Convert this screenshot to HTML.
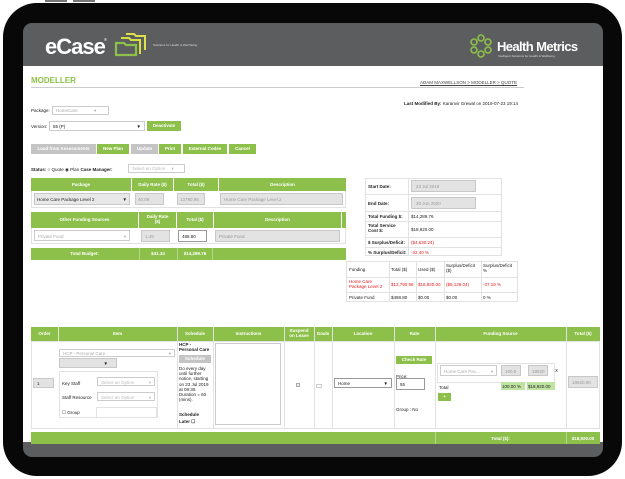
<!DOCTYPE html>
<html><head><style>
*{margin:0;padding:0;box-sizing:border-box}
body{width:625px;height:479px;background:#fff;position:relative;overflow:hidden;font-family:"Liberation Sans",sans-serif;color:#222}
.a{position:absolute}
.t{font-size:4.5px;white-space:nowrap}
.g{background:#8dc04b;color:#fff;font-weight:bold;text-align:center}
.in{background:#e3e3e3;border:1px solid #c8c8c8}
.wb{background:#fff;border:1px solid #ccc}
.bd{border:1px solid #e2e2e2}
.btn{position:absolute;top:144px;height:10px;font-size:4.5px;font-weight:bold;color:#fff;text-align:center;line-height:10px}
</style></head><body>
<div class="a" style="left:3px;top:3px;width:619px;height:473px;background:#080808;border-radius:34px"></div>
<div class="a" style="left:45px;top:0;width:22px;height:2px;background:#777"></div>
<div class="a" style="left:73px;top:0;width:22px;height:2px;background:#777"></div>
<div class="a" style="left:23px;top:23px;width:580px;height:434px;background:#5c5d5e;border-radius:9px;overflow:hidden">
 <div class="a" style="left:0;top:43px;width:580px;height:376px;background:#fff"></div>
</div>
<!-- header -->
<div class="a" style="left:45px;top:34px;font-size:22px;font-weight:bold;color:#fff;letter-spacing:-1px">eCase</div>
<div class="a" style="left:104px;top:37px;font-size:4px;color:#fff">®</div>
<svg class="a" style="left:114px;top:32px" width="34" height="25"><path d="M12 2h8l2 2h9v14" fill="none" stroke="#e0e04a" stroke-width="2"/><path d="M7 6h8l2 2h9v14" fill="none" stroke="#d7df3e" stroke-width="2"/><path d="M2 11h8l2 2h10v10H2z" fill="none" stroke="#8dc04b" stroke-width="2.2"/></svg>
<div class="a t" style="left:153px;top:43px;font-size:3px;color:#ddd">Solutions for Health &amp; Well Being</div>
<svg class="a" style="left:469px;top:34px" width="24" height="24"><g fill="none" stroke="#8dc04b" stroke-width="1.6"><circle cx="12" cy="4" r="3"/><circle cx="19" cy="8" r="3"/><circle cx="19" cy="16" r="3"/><circle cx="12" cy="20" r="3"/><circle cx="5" cy="16" r="3"/><circle cx="5" cy="8" r="3"/></g></svg>
<div class="a" style="left:497px;top:39px;font-size:13px;font-weight:bold;color:#fff;letter-spacing:-0.6px">Health Metrics</div>
<div class="a t" style="left:498px;top:54px;font-size:3px;color:#ddd">Intelligent Solutions for Health &amp; Wellbeing</div>
<!-- title -->
<div class="a" style="left:31px;top:76px;font-size:8px;font-weight:bold;color:#8dc04b">MODELLER</div>
<div class="a t" style="left:420px;top:80px;font-size:4.5px;text-decoration:underline;color:#444">ADAM MAXWELLSON &gt; MODELLER &gt; QUOTE</div>
<div class="a" style="left:31px;top:87px;width:493px;height:1px;background:#ccc"></div>
<div class="a t" style="left:404px;top:101px"><b>Last Modified By:</b> Karanvir Grewal on 2019-07-23 19:14</div>
<div class="a t" style="left:31px;top:108px">Package:</div>
<div class="a wb t" style="left:52px;top:106px;width:57px;height:9px;color:#aaa;padding:1px 3px">HomeCare&nbsp;&nbsp;&nbsp;&nbsp;&nbsp;&nbsp;&nbsp;&nbsp;&nbsp;&nbsp;&nbsp;&nbsp;&nbsp;▾</div>
<div class="a t" style="left:31px;top:124px">Version:</div>
<div class="a wb t" style="left:49px;top:121px;width:96px;height:10px;padding:2px 3px">55 (P)<span style="float:right">▼</span></div>
<div class="a g t" style="left:147px;top:121px;width:34px;height:10px;line-height:10px">Deactivate</div>
<div class="btn" style="left:31px;width:65px;background:#c4c4c4">Load from Assessments</div>
<div class="btn" style="left:97px;width:32px;background:#8dc04b">New Plan</div>
<div class="btn" style="left:131px;width:27px;background:#c4c4c4">Update</div>
<div class="btn" style="left:159px;width:22px;background:#8dc04b">Print</div>
<div class="btn" style="left:183px;width:44px;background:#8dc04b">External Codes</div>
<div class="btn" style="left:229px;width:27px;background:#8dc04b">Cancel</div>
<div class="a t" style="left:31px;top:167px"><b>Status:</b> ○ Quote ◉ Plan <b>Case Manager:</b></div>
<div class="a wb t" style="left:128px;top:164px;width:57px;height:9px;color:#bbb;padding:1px 3px">Select an Option&nbsp;&nbsp;&nbsp;&nbsp;&nbsp;▾</div>
<!-- package table -->
<div class="a bd" style="left:31px;top:178px;width:315px;height:30px"></div>
<div class="a g t" style="left:31px;top:178px;width:100px;height:13px;line-height:13px">Package</div>
<div class="a g t" style="left:132px;top:178px;width:41px;height:13px;line-height:13px">Daily Rate ($)</div>
<div class="a g t" style="left:174px;top:178px;width:44px;height:13px;line-height:13px">Total ($)</div>
<div class="a g t" style="left:219px;top:178px;width:127px;height:13px;line-height:13px">Description</div>
<div class="a in t" style="left:34px;top:193px;width:96px;height:12px;padding:3px 2px;background:#e8e8e8">Home Care Package Level 2<span style="float:right">▼</span></div>
<div class="a in t" style="left:135px;top:193px;width:29px;height:12px;padding:3px 2px;color:#999">40.09</div>
<div class="a in t" style="left:177px;top:193px;width:28px;height:12px;padding:3px 2px;color:#999">13790.96</div>
<div class="a in t" style="left:220px;top:193px;width:123px;height:12px;padding:3px 3px;color:#999">Home Care Package Level 2</div>
<!-- other funding -->
<div class="a bd" style="left:31px;top:212px;width:315px;height:32px"></div>
<div class="a g t" style="left:31px;top:212px;width:107px;height:16px;line-height:16px">Other Funding Sources</div>
<div class="a g t" style="left:139px;top:212px;width:37px;height:16px;line-height:5px;padding-top:2px">Daily Rate<br>($)</div>
<div class="a g t" style="left:177px;top:212px;width:36px;height:16px;line-height:16px">Total ($)</div>
<div class="a g t" style="left:214px;top:212px;width:127px;height:16px;line-height:16px">Description</div>
<div class="a g" style="left:342px;top:212px;width:4px;height:16px"></div>
<div class="a wb t" style="left:34px;top:230px;width:96px;height:11px;padding:3px 3px;color:#aaa">Private Fund<span style="float:right">▾</span></div>
<div class="a in t" style="left:141px;top:230px;width:29px;height:12px;padding:3px 3px;color:#999">1.45</div>
<div class="a wb t" style="left:178px;top:230px;width:29px;height:12px;padding:3px 3px;border-color:#999">488.80</div>
<div class="a in t" style="left:215px;top:230px;width:125px;height:12px;padding:3px 3px;color:#999">Private Fund</div>
<!-- total budget -->
<div class="a g t" style="left:31px;top:248px;width:315px;height:12px"></div>
<div class="a g t" style="left:31px;top:248px;width:107px;height:12px;line-height:12px">Total Budget:</div>
<div class="a g t" style="left:139px;top:248px;width:37px;height:12px;line-height:12px;border-left:1px solid #b5d88c">$41.34</div>
<div class="a g t" style="left:177px;top:248px;width:36px;height:12px;line-height:12px;border-left:1px solid #b5d88c;border-right:1px solid #b5d88c">$14,289.76</div>
<!-- info table -->
<div class="a bd" style="left:365px;top:178px;width:137px;height:78px"></div>
<div class="a" style="left:365px;top:194px;width:137px;height:1px;background:#e2e2e2"></div>
<div class="a" style="left:365px;top:211px;width:137px;height:1px;background:#e2e2e2"></div>
<div class="a" style="left:365px;top:221px;width:137px;height:1px;background:#e2e2e2"></div>
<div class="a" style="left:365px;top:237px;width:137px;height:1px;background:#e2e2e2"></div>
<div class="a" style="left:365px;top:247px;width:137px;height:1px;background:#e2e2e2"></div>
<div class="a" style="left:408px;top:178px;width:1px;height:78px;background:#e2e2e2"></div>
<div class="a t" style="left:368px;top:184px;font-weight:bold">Start Date:</div>
<div class="a in t" style="left:411px;top:180px;width:65px;height:12px;padding:3px 4px;color:#999">23 Jul 2019</div>
<div class="a t" style="left:368px;top:201px;font-weight:bold">End Date:</div>
<div class="a in t" style="left:411px;top:197px;width:65px;height:12px;padding:3px 4px;color:#999">30 Jun 2020</div>
<div class="a t" style="left:368px;top:214px;font-weight:bold">Total Funding $:</div>
<div class="a t" style="left:411px;top:214px">$14,289.76</div>
<div class="a t" style="left:368px;top:223px;font-weight:bold;line-height:5px">Total Service<br>Cost $:</div>
<div class="a t" style="left:411px;top:227px">$18,920.00</div>
<div class="a t" style="left:368px;top:240px;font-weight:bold">$ Surplus/Deficit:</div>
<div class="a t" style="left:411px;top:240px;color:#e02020">($4,630.24)</div>
<div class="a t" style="left:368px;top:250px;font-weight:bold">% Surplus/Deficit:</div>
<div class="a t" style="left:411px;top:250px;color:#e02020">-32.40 %</div>
<!-- funding table -->
<div class="a bd" style="left:346px;top:261px;width:172px;height:41px"></div>
<div class="a" style="left:346px;top:277px;width:172px;height:1px;background:#e2e2e2"></div>
<div class="a" style="left:346px;top:292px;width:172px;height:1px;background:#e2e2e2"></div>
<div class="a" style="left:389px;top:261px;width:1px;height:41px;background:#e2e2e2"></div>
<div class="a" style="left:416px;top:261px;width:1px;height:41px;background:#e2e2e2"></div>
<div class="a" style="left:444px;top:261px;width:1px;height:41px;background:#e2e2e2"></div>
<div class="a" style="left:481px;top:261px;width:1px;height:41px;background:#e2e2e2"></div>
<div class="a t" style="left:349px;top:267px">Funding</div>
<div class="a t" style="left:391px;top:267px">Total ($)</div>
<div class="a t" style="left:418px;top:267px">Used ($)</div>
<div class="a t" style="left:446px;top:263px;line-height:5px">Surplus/Deficit<br>($)</div>
<div class="a t" style="left:483px;top:263px;line-height:5px">Surplus/Deficit<br>%</div>
<div class="a t" style="left:349px;top:279px;line-height:5px;color:#e02020">Home Care<br>Package Level 2</div>
<div class="a t" style="left:391px;top:282px;color:#e02020">$13,790.96</div>
<div class="a t" style="left:418px;top:282px;color:#e02020">$18,920.00</div>
<div class="a t" style="left:446px;top:282px;color:#e02020">($5,129.04)</div>
<div class="a t" style="left:483px;top:282px;color:#e02020">-37.19 %</div>
<div class="a t" style="left:349px;top:295px">Private Fund</div>
<div class="a t" style="left:391px;top:295px">$488.80</div>
<div class="a t" style="left:418px;top:295px">$0.00</div>
<div class="a t" style="left:446px;top:295px">$0.00</div>
<div class="a t" style="left:483px;top:295px">0 %</div>
<!-- bottom table -->
<div class="a g" style="left:31px;top:327px;width:569px;height:14px"></div>
<div class="a bd" style="left:31px;top:341px;width:569px;height:88px"></div>
<div class="a t g" style="left:31px;top:331px;width:27px;background:none">Order</div>
<div class="a t g" style="left:58px;top:331px;width:119px;background:none">Item</div>
<div class="a t g" style="left:177px;top:331px;width:36px;background:none">Schedule</div>
<div class="a t g" style="left:213px;top:331px;width:71px;background:none">Instructions</div>
<div class="a t g" style="left:284px;top:328px;width:30px;background:none;line-height:5px">Suspend<br>on Leave</div>
<div class="a t g" style="left:314px;top:331px;width:18px;background:none">Goals</div>
<div class="a t g" style="left:332px;top:331px;width:62px;background:none">Location</div>
<div class="a t g" style="left:394px;top:331px;width:41px;background:none">Rate</div>
<div class="a t g" style="left:435px;top:331px;width:131px;background:none">Funding Source</div>
<div class="a t g" style="left:566px;top:331px;width:34px;background:none">Total ($)</div>
<div class="a" style="left:58px;top:327px;width:1px;height:102px;background:#fff;opacity:.7"></div>
<div class="a" style="left:177px;top:327px;width:1px;height:102px;background:#e2e2e2"></div>
<div class="a" style="left:213px;top:327px;width:1px;height:102px;background:#e2e2e2"></div>
<div class="a" style="left:284px;top:327px;width:1px;height:102px;background:#e2e2e2"></div>
<div class="a" style="left:314px;top:327px;width:1px;height:102px;background:#e2e2e2"></div>
<div class="a" style="left:332px;top:327px;width:1px;height:102px;background:#e2e2e2"></div>
<div class="a" style="left:394px;top:327px;width:1px;height:102px;background:#e2e2e2"></div>
<div class="a" style="left:435px;top:327px;width:1px;height:102px;background:#e2e2e2"></div>
<div class="a" style="left:566px;top:327px;width:1px;height:102px;background:#e2e2e2"></div>
<div class="a in t" style="left:33px;top:378px;width:21px;height:10px;padding:2px 3px">1</div>
<div class="a wb t" style="left:59px;top:349px;width:116px;height:8px;padding:1px 3px;color:#aaa">HCP - Personal Care<span style="float:right">▾</span></div>
<div class="a in t" style="left:59px;top:358px;width:58px;height:10px;padding:2px 3px;text-align:right;padding-right:8px">▼</div>
<div class="a bd" style="left:59px;top:371px;width:99px;height:47px"></div>
<div class="a t" style="left:62px;top:381px">Key Staff</div>
<div class="a wb t" style="left:97px;top:377px;width:58px;height:9px;padding:2px 3px;color:#bbb">Select an Option<span style="float:right">▾</span></div>
<div class="a t" style="left:62px;top:395px">Staff Resource</div>
<div class="a wb t" style="left:97px;top:392px;width:58px;height:9px;padding:2px 3px;color:#bbb">Select an Option<span style="float:right">▾</span></div>
<div class="a t" style="left:62px;top:410px">☐ Group</div>
<div class="a bd" style="left:96px;top:407px;width:61px;height:11px"></div>
<div class="a t" style="left:179px;top:342px;line-height:5px;font-weight:bold">HCP -<br>Personal Care</div>
<div class="a t g" style="left:179px;top:355px;width:32px;height:8px;line-height:8px;background:#c4c4c4">Schedule</div>
<div class="a t" style="left:179px;top:366px;line-height:5.2px">Do every day<br>until further<br>notice, starting<br>on 23 Jul 2019<br>at 08:30.<br>Duration = 60<br>(mins).</div>
<div class="a t" style="left:179px;top:411px;line-height:7px;font-weight:bold">Schedule<br>Later ☐</div>
<div class="a wb" style="left:215px;top:343px;width:66px;height:82px"></div>
<div class="a" style="left:296px;top:383px;width:4px;height:4px;border:1px solid #aaa;background:#eee"></div>
<div class="a" style="left:316px;top:384px;width:6px;height:4px;border:1px solid #ccc"></div>
<div class="a wb t" style="left:334px;top:378px;width:58px;height:10px;padding:2px 3px;border-color:#999">Home<span style="float:right">▼</span></div>
<div class="a g t" style="left:396px;top:356px;width:36px;height:8px;line-height:8px">Check Rate</div>
<div class="a t" style="left:396px;top:374px">Price:</div>
<div class="a wb t" style="left:396px;top:378px;width:29px;height:12px;padding:3px 3px;border-color:#999">55</div>
<div class="a t" style="left:396px;top:407px">Group : No</div>
<div class="a bd" style="left:437px;top:363px;width:118px;height:20px"></div>
<div class="a wb t" style="left:440px;top:365px;width:57px;height:11px;padding:3px 3px;color:#aaa">Home Care Pac...<span style="float:right">▾</span></div>
<div class="a in t" style="left:501px;top:365px;width:20px;height:11px;padding:3px 3px;color:#999">100.0</div>
<div class="a in t" style="left:528px;top:365px;width:20px;height:11px;padding:3px 3px;color:#999">18920</div>
<div class="a t" style="left:555px;top:368px">X</div>
<div class="a t" style="left:439px;top:385px">Total</div>
<div class="a t" style="left:501px;top:382px;width:24px;height:8px;background:#bfe3a1;padding:2px 1px">100.00 %</div>
<div class="a t" style="left:527px;top:382px;width:28px;height:8px;background:#bfe3a1;padding:2px 1px">$18,920.00</div>
<div class="a g t" style="left:438px;top:393px;width:13px;height:8px;line-height:8px">+</div>
<div class="a in t" style="left:568px;top:376px;width:30px;height:12px;padding:3px 3px;color:#999">18920.00</div>
<div class="a g" style="left:31px;top:432px;width:569px;height:12px"></div>
<div class="a" style="left:435px;top:432px;width:1px;height:12px;background:#b5d88c"></div>
<div class="a" style="left:566px;top:432px;width:1px;height:12px;background:#b5d88c"></div>
<div class="a t g" style="left:435px;top:436px;width:131px;background:none">Total ($):</div>
<div class="a t g" style="left:566px;top:436px;width:34px;background:none">$18,920.00</div>
</body></html>
